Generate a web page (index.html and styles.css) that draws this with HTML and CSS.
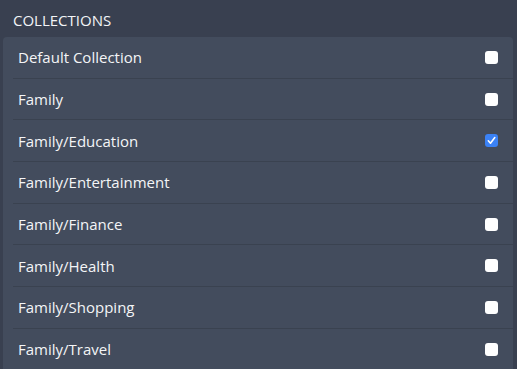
FILE: index.html
```html
<!DOCTYPE html>
<html>
<head>
<meta charset="utf-8">
<link rel="stylesheet" href="styles.css">
</head>
<body>
<div class="page">
  <div class="heading">COLLECTIONS</div>
  <div class="panel">
    <div class="row"><span class="label">Default Collection</span><span class="box"></span></div>
    <div class="row"><span class="label">Family</span><span class="box"></span></div>
    <div class="row"><span class="label">Family/Education</span><span class="box checked"><svg viewBox="0 0 13 13" width="13" height="13"><path d="M3.3 6.8 L5.5 9.2 L9.8 3.6" fill="none" stroke="#fff" stroke-width="1.6" stroke-linecap="round" stroke-linejoin="round"/></svg></span></div>
    <div class="row"><span class="label">Family/Entertainment</span><span class="box"></span></div>
    <div class="row"><span class="label">Family/Finance</span><span class="box"></span></div>
    <div class="row"><span class="label">Family/Health</span><span class="box"></span></div>
    <div class="row"><span class="label">Family/Shopping</span><span class="box"></span></div>
    <div class="row"><span class="label">Family/Travel</span><span class="box"></span></div>
  </div>
</div>
</body>
</html>
```
FILE: styles.css
```css
html, body {
  margin: 0;
  padding: 0;
  background: #394050;
  font-family: "Open Sans", "Liberation Sans", sans-serif;
  color: #ffffff;
  overflow: hidden;
}
.page {
  width: 517px;
  height: 369px;
  padding: 0 4px 0 3px;
  box-sizing: border-box;
}
.heading {
  height: 37px;
  padding-left: 10px;
  box-sizing: border-box;
  padding-top: 10px;
  font-size: 15px;
  line-height: 20px;
  color: #f2f4f7;
}
.panel {
  background: #434c5d;
  border-radius: 4px 4px 0 0;
  padding-left: 10px;
  height: 340px;
}
.row {
  display: flex;
  align-items: center;
  justify-content: space-between;
  height: 40.7px;
  border-bottom: 1px solid #3a4250;
  padding: 0 15px 0 5px;
}
.row:last-child {
  border-bottom: none;
}
.label {
  font-size: 15px;
  color: #f4f5f7;
}
.box {
  width: 13px;
  height: 13px;
  border-radius: 3px;
  background: #ffffff;
  display: block;
}
.box.checked {
  background: #3b82f6;
}
.box svg {
  display: block;
}
```
